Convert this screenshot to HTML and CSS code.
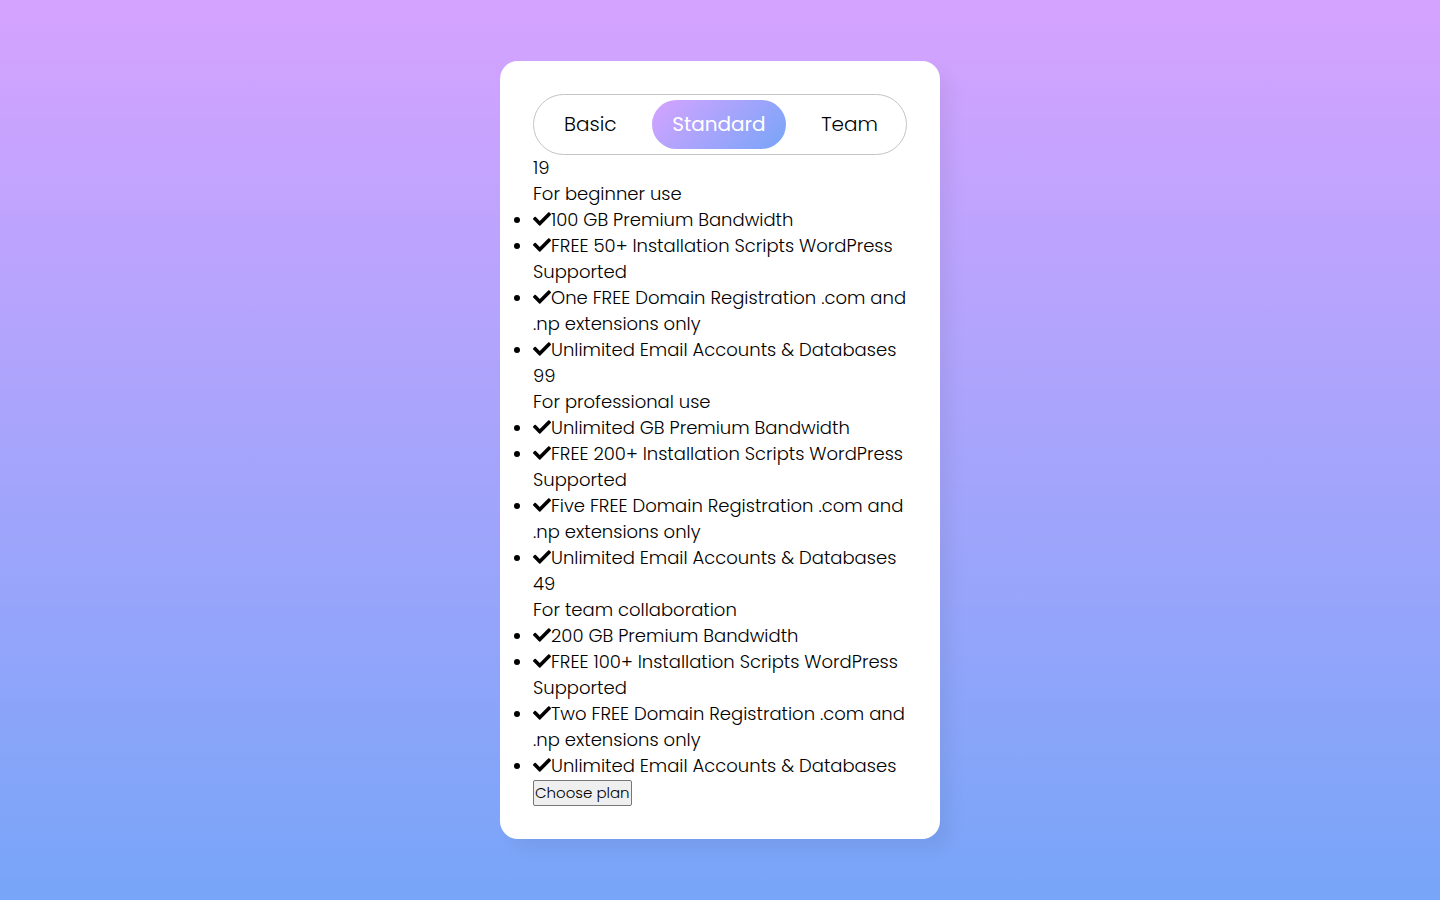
FILE: index.html
```html
<!DOCTYPE html>
<html lang="en">
<head>
  <meta charset="UTF-8">
  <meta name="viewport" content="width=device-width, initial-scale=1.0">
  <title>Pricing Plans</title>
  <link rel="stylesheet" href="styles.css">
</head>
<body>
  <!-- check icon, reused by every feature -->
  <svg class="sprite" aria-hidden="true">
    <symbol id="check" viewBox="0 0 512 512">
      <path d="M173.898 439.404l-166.4-166.4c-9.997-9.997-9.997-26.206 0-36.204l36.203-36.204c9.997-9.998 26.207-9.998 36.204 0L192 312.69 432.095 72.596c9.997-9.997 26.207-9.997 36.204 0l36.203 36.204c9.997 9.997 9.997 26.206 0 36.204l-294.4 294.401c-9.998 9.997-26.207 9.997-36.204-.001z"/>
    </symbol>
  </svg>

  <div class="wrapper">
    <div class="tabs">
      <input type="radio" name="plan" id="basic">
      <label for="basic">Basic</label>
      <input type="radio" name="plan" id="standard" checked>
      <label for="standard">Standard</label>
      <input type="radio" name="plan" id="team">
      <label for="team">Team</label>
    </div>

    <div class="plan">
      <div class="price">19</div>
      <div class="info">For beginner use</div>
      <ul class="features">
        <li><svg class="icon"><use href="#check"/></svg><span>100 GB Premium Bandwidth</span></li>
        <li><svg class="icon"><use href="#check"/></svg><span>FREE 50+ Installation Scripts WordPress Supported</span></li>
        <li><svg class="icon"><use href="#check"/></svg><span>One FREE Domain Registration .com and .np extensions only</span></li>
        <li><svg class="icon"><use href="#check"/></svg><span>Unlimited Email Accounts &amp; Databases</span></li>
      </ul>
    </div>

    <div class="plan">
      <div class="price">99</div>
      <div class="info">For professional use</div>
      <ul class="features">
        <li><svg class="icon"><use href="#check"/></svg><span>Unlimited GB Premium Bandwidth</span></li>
        <li><svg class="icon"><use href="#check"/></svg><span>FREE 200+ Installation Scripts WordPress Supported</span></li>
        <li><svg class="icon"><use href="#check"/></svg><span>Five FREE Domain Registration .com and .np extensions only</span></li>
        <li><svg class="icon"><use href="#check"/></svg><span>Unlimited Email Accounts &amp; Databases</span></li>
      </ul>
    </div>

    <div class="plan">
      <div class="price">49</div>
      <div class="info">For team collaboration</div>
      <ul class="features">
        <li><svg class="icon"><use href="#check"/></svg><span>200 GB Premium Bandwidth</span></li>
        <li><svg class="icon"><use href="#check"/></svg><span>FREE 100+ Installation Scripts WordPress Supported</span></li>
        <li><svg class="icon"><use href="#check"/></svg><span>Two FREE Domain Registration .com and .np extensions only</span></li>
        <li><svg class="icon"><use href="#check"/></svg><span>Unlimited Email Accounts &amp; Databases</span></li>
      </ul>
    </div>

    <button type="button" class="choose-btn">Choose plan</button>
  </div>
</body>
</html>
```

FILE: styles.css
```css
* {
  margin: 0;
  padding: 0;
  box-sizing: border-box;
  font-family: Poppins, Inter, sans-serif;
}
body {
  min-height: 100vh;
  display: flex;
  align-items: center;
  justify-content: center;
  background: linear-gradient(#d5a3ff 0%, #77a5f8 100%);
  font-size: 18px;
  font-weight: 300;
  line-height: 26px;
  color: #000;
}
.sprite {
  position: absolute;
  width: 0;
  height: 0;
}
.wrapper {
  width: 100%;
  max-width: 440px;
  background: #fff;
  border-radius: 18px;
  padding: 33px;
  box-shadow: 11px 11px 16px rgba(0, 0, 0, 0.05);
}
.tabs {
  display: flex;
  align-items: center;
  justify-content: space-between;
  padding: 5px 8px 5px 10px;
  border: 1px solid #c4c4c4;
  border-radius: 31px;
}
.tabs input {
  position: absolute;
  opacity: 0;
  pointer-events: none;
}
.tabs label {
  padding: 0 20px;
  border-radius: 25px;
  font-size: 20px;
  font-weight: 300;
  line-height: 49px;
  cursor: pointer;
}
.tabs input:checked + label {
  color: #fff;
  font-weight: 400;
  background: linear-gradient(-45deg, #77a5f8 0%, #d5a3ff 100%);
}
.icon {
  width: 18px;
  height: 18px;
  vertical-align: -2px;
}
.choose-btn {
  display: block;
  margin-top: 1px;
  padding: 0 1px;
  border: 1px solid #767676;
  border-radius: 2px;
  background: #efefef;
  color: #000;
  font-size: 15px;
  font-weight: 300;
  line-height: 24px;
}
```
